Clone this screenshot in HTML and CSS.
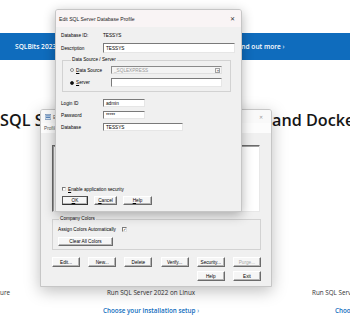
FILE: index.html
```html
<!DOCTYPE html>
<html>
<head>
<meta charset="utf-8">
<link rel="stylesheet" href="styles.css">
</head>
<body>
<div class="page">
  <div class="banner">
    <span class="banner-left">SQLBits 2023</span>
    <span class="banner-right">Find out more <span class="chev">&#x203A;</span></span>
  </div>
  <h1 class="heading"><span class="h-left">SQL Server</span><span class="h-right">and Docker</span></h1>
  <div class="cards">
    <div class="card c1"><span class="card-title">Azure</span></div>
    <div class="card c2">
      <div class="card-title">Run SQL Server 2022 on Linux</div>
      <a class="card-link">Choose your installation setup <span class="chev">&#x203A;</span></a>
    </div>
    <div class="card c3">
      <div class="card-title">Run SQL Server 2022 on Docker</div>
      <a class="card-link c3-link">Choose your container setup <span class="chev">&#x203A;</span></a>
    </div>
  </div>
</div>

<div class="win back">
  <div class="b-title">
    <svg class="b-icon" width="6" height="6" viewBox="0 0 6 6"><rect x="0" y="0.5" width="6" height="5" fill="#d8e4f0" stroke="#5a7da8" stroke-width="0.6"/><rect x="1" y="1.5" width="4" height="0.8" fill="#3b6fb0"/><rect x="1" y="3" width="4" height="0.8" fill="#3b6fb0"/></svg>
    <span class="b-title-text">E</span>
    <span class="b-close">&#x2715;</span>
  </div>
  <div class="b-menu"><span>Profiles</span></div>
  <div class="b-body">
    <div class="b-list"></div>
    <fieldset class="b-group">
      <legend>Company Colors</legend>
      <div class="b-assign"><span class="b-assign-label">Assign Colors Automatically</span><span class="chk checked">&#x2713;</span></div>
      <div class="btn b-clear">Clear All Colors</div>
    </fieldset>
    <div class="b-buttons">
      <div class="btn">Edit...</div>
      <div class="btn">New...</div>
      <div class="btn">Delete</div>
      <div class="btn">Verify...</div>
      <div class="btn">Security...</div>
      <div class="btn disabled">Purge...</div>
      <div class="btn col5">Help</div>
      <div class="btn col6">Exit</div>
    </div>
  </div>
</div>

<div class="win front">
  <div class="f-title">
    <span class="f-title-text">Edit SQL Server Database Profile</span>
    <span class="f-close">&#x2715;</span>
  </div>
  <div class="f-body">
    <div class="f-row f-dbid"><span class="f-label">Database ID:</span><span>TESSYS</span></div>
    <div class="f-row f-desc"><span class="f-label">Description</span><div class="input w-desc">TESSYS</div></div>
    <fieldset class="f-group">
      <legend>Data Source / Server</legend>
      <div class="g-row g-row1">
        <span class="radio"></span><span class="g-label"><u>D</u>ata Source</span>
        <div class="combo"><span class="combo-text">_SQLEXPRESS</span><span class="combo-btn">&#x25BE;</span></div>
      </div>
      <div class="g-row g-row2">
        <span class="radio on"></span><span class="g-label"><u>S</u>erver</span>
        <div class="input w-server"></div>
      </div>
    </fieldset>
    <div class="f-row f-login"><span class="f-label">Login ID</span><div class="input w-short">admin</div></div>
    <div class="f-row f-pass"><span class="f-label">Password</span><div class="input w-short">*****</div></div>
    <div class="f-row f-pass"><span class="f-label">Database</span><div class="input w-db">TESSYS</div></div>
    <div class="f-row f-sec"><span class="chk"></span><span><u>E</u>nable application security</span></div>
    <div class="f-buttons">
      <div class="btn b-ok"><u>O</u>K</div>
      <div class="btn b-cancel"><u>C</u>ancel</div>
      <div class="btn b-help"><u>H</u>elp</div>
    </div>
  </div>
</div>
</body>
</html>
```

FILE: styles.css
```css
* { box-sizing: border-box; }
html, body { margin: 0; padding: 0; }
body {
  width: 350px;
  height: 335px;
  overflow: hidden;
  background: #fff;
  font-family: "Open Sans", "Noto Sans", sans-serif;
  position: relative;
}

.page { padding-top: 33px; }

.banner {
  height: 27px;
  background: #0f6cbd;
  color: #fff;
  display: flex;
  align-items: center;
  font-size: 6.6px;
  font-weight: 600;
  white-space: nowrap;
  overflow: hidden;
}
.banner-left { margin-left: 15px; width: 221px; flex: none; }
.chev { font-weight: 400; }

.heading {
  margin: 51px 0 0;
  font-size: 16.2px;
  line-height: 18px;
  font-weight: 600;
  color: #161616;
  display: flex;
  white-space: nowrap;
  overflow: hidden;
}
.h-left { width: 272px; flex: none; }

.cards {
  margin-top: 159px;
  display: flex;
  white-space: nowrap;
  font-size: 6.3px;
  line-height: 9px;
}
.card-title { color: #333; }
.c1 { width: 10px; flex: none; display: flex; justify-content: flex-end; }
.c2 { margin-left: 40px; width: 202px; flex: none; text-align: center; }
.c3 { margin-left: 60px; flex: none; }
.card-link {
  display: block;
  margin-top: 9px;
  color: #0f6cbd;
  font-weight: 600;
}
.c3-link { padding-left: 23px; }

/* ---------- windows ---------- */
.win {
  position: absolute;
  background: #f0f0f0;
  border: 1px solid #c6c6c6;
  border-radius: 3px 3px 0 0;
  font-family: "Liberation Sans", Arial, sans-serif;
  font-size: 4.7px;
  color: #000;
  overflow: hidden;
}
.front {
  left: 55px;
  top: 9px;
  width: 187px;
  height: 203px;
  box-shadow: 0 3px 12px rgba(0, 0, 0, 0.3);
}
.back {
  left: 40px;
  top: 109px;
  width: 232px;
  height: 178px;
  box-shadow: 0 4px 16px rgba(0, 0, 0, 0.26);
}

/* front window */
.f-title {
  height: 17px;
  background: #f9f4f5;
  display: flex;
  align-items: center;
  padding: 0 6px 0 3px;
}
.f-title-text { flex: 1; font-size: 5.1px; color: #1a1a1a; }
.f-close { font-size: 5.5px; color: #333; }

.f-body { padding: 0 5px; }
.f-row { display: flex; align-items: center; height: 8px; }
.f-dbid { margin-top: 4px; }
.f-desc { margin-top: 4px; height: 10px; }
.f-label { width: 42px; flex: none; }
.f-login { margin-top: 7px; }
.f-pass { margin-top: 4px; }
.f-sec { margin-top: 54px; padding-left: 1px; }

.input {
  height: 100%;
  background: #fff;
  border: 1px solid;
  border-color: #7a7a7a #e6e6e6 #e6e6e6 #7a7a7a;
  display: flex;
  align-items: center;
  padding-left: 2px;
  font-size: 4.7px;
}
.w-desc { width: 132px; }
.w-server { width: 111px; }
.w-short { width: 42px; }
.w-db { width: 80px; }

.f-group {
  margin: 4px 5px 0 1px;
  padding: 0 0 4px 7px;
  border: 1px solid #d2d2d2;
  min-width: 0;
}
.f-group legend, .b-group legend {
  font-size: 4.7px;
  line-height: 6px;
  padding: 0 1px;
  margin-left: 1px;
}
.g-row { display: flex; align-items: center; }
.g-row1 { margin-top: 3px; height: 8px; }
.g-row2 { margin-top: 4px; height: 9px; }
.radio {
  width: 4px;
  height: 4px;
  border-radius: 50%;
  border: 0.6px solid #8a8a8a;
  background: #fff;
  flex: none;
  margin-right: 2px;
}
.radio.on { background: #000; border-color: #333; }
.g-label { width: 35px; flex: none; }
.combo {
  width: 111px;
  height: 100%;
  background: #f4f4f4;
  border: 1px solid;
  border-color: #8a8a8a #e0e0e0 #e0e0e0 #8a8a8a;
  display: flex;
  align-items: center;
  padding-left: 2px;
}
.combo-text { flex: 1; color: #9a9a9a; }
.combo-btn {
  width: 5px;
  height: 5px;
  border: 0.6px solid #a0a0a0;
  font-size: 4px;
  line-height: 4px;
  text-align: center;
  color: #888;
  margin-right: 1px;
}

.chk {
  width: 4px;
  height: 4px;
  border: 1px solid;
  border-color: #7a7a7a #e0e0e0 #e0e0e0 #7a7a7a;
  background: #fff;
  flex: none;
  margin-right: 2px;
  font-size: 4px;
  line-height: 3px;
  text-align: center;
}
.chk.checked { width: 5px; height: 5px; margin: 0; }

.f-buttons {
  display: flex;
  margin-top: 3px;
  margin-left: 1px;
  gap: 6px;
  height: 9px;
}
.btn {
  background: #f6f6f6;
  border: 1px solid;
  border-color: #ffffff #6b6b6b #6b6b6b #ffffff;
  box-shadow: inset -1px -1px 0 #b4b4b4;
  display: flex;
  align-items: center;
  justify-content: center;
  font-size: 4.7px;
  white-space: nowrap;
}
.b-ok { width: 26px; border-color: #555 #333 #333 #555; }
.b-cancel { width: 23px; }
.b-help { width: 29px; }
.btn.disabled { color: #a8a8a8; }

/* back window */
.b-title {
  height: 13px;
  background: #f9f9f9;
  display: flex;
  align-items: center;
  padding: 0 8px 0 4px;
}
.b-icon { flex: none; margin-right: 2px; }
.b-title-text { flex: 1; color: #666; font-size: 5px; }
.b-close { font-size: 5px; color: #9a9a9a; }
.b-menu {
  height: 10px;
  background: #fcfcfc;
  display: flex;
  align-items: center;
  padding-left: 3px;
  color: #555;
}
.b-body { padding: 0 10px 0 11px; }
.b-list {
  margin-top: 12px;
  height: 67px;
  width: 208px;
  background: #fff;
  border: 1px solid;
  border-color: #6b6b6b #e8e8e8 #e8e8e8 #6b6b6b;
  box-shadow: inset 1px 1px 0 #a0a0a0;
}
.b-group {
  margin: 4px 0 0;
  padding: 0 0 3px 5px;
  border: 1px solid #d2d2d2;
  width: 209px;
  min-width: 0;
}
.b-assign { display: flex; align-items: center; margin-top: 3px; height: 8px; }
.b-assign-label { width: 64px; flex: none; }
.b-clear { margin-top: 4px; height: 9px; width: 55px; }

.b-buttons {
  margin-top: 7px;
  display: grid;
  grid-template-columns: repeat(6, 28px);
  column-gap: 8.2px;
  row-gap: 4px;
  grid-auto-rows: 10px;
}
.col5 { grid-column: 5; }
.col6 { grid-column: 6; }
```
